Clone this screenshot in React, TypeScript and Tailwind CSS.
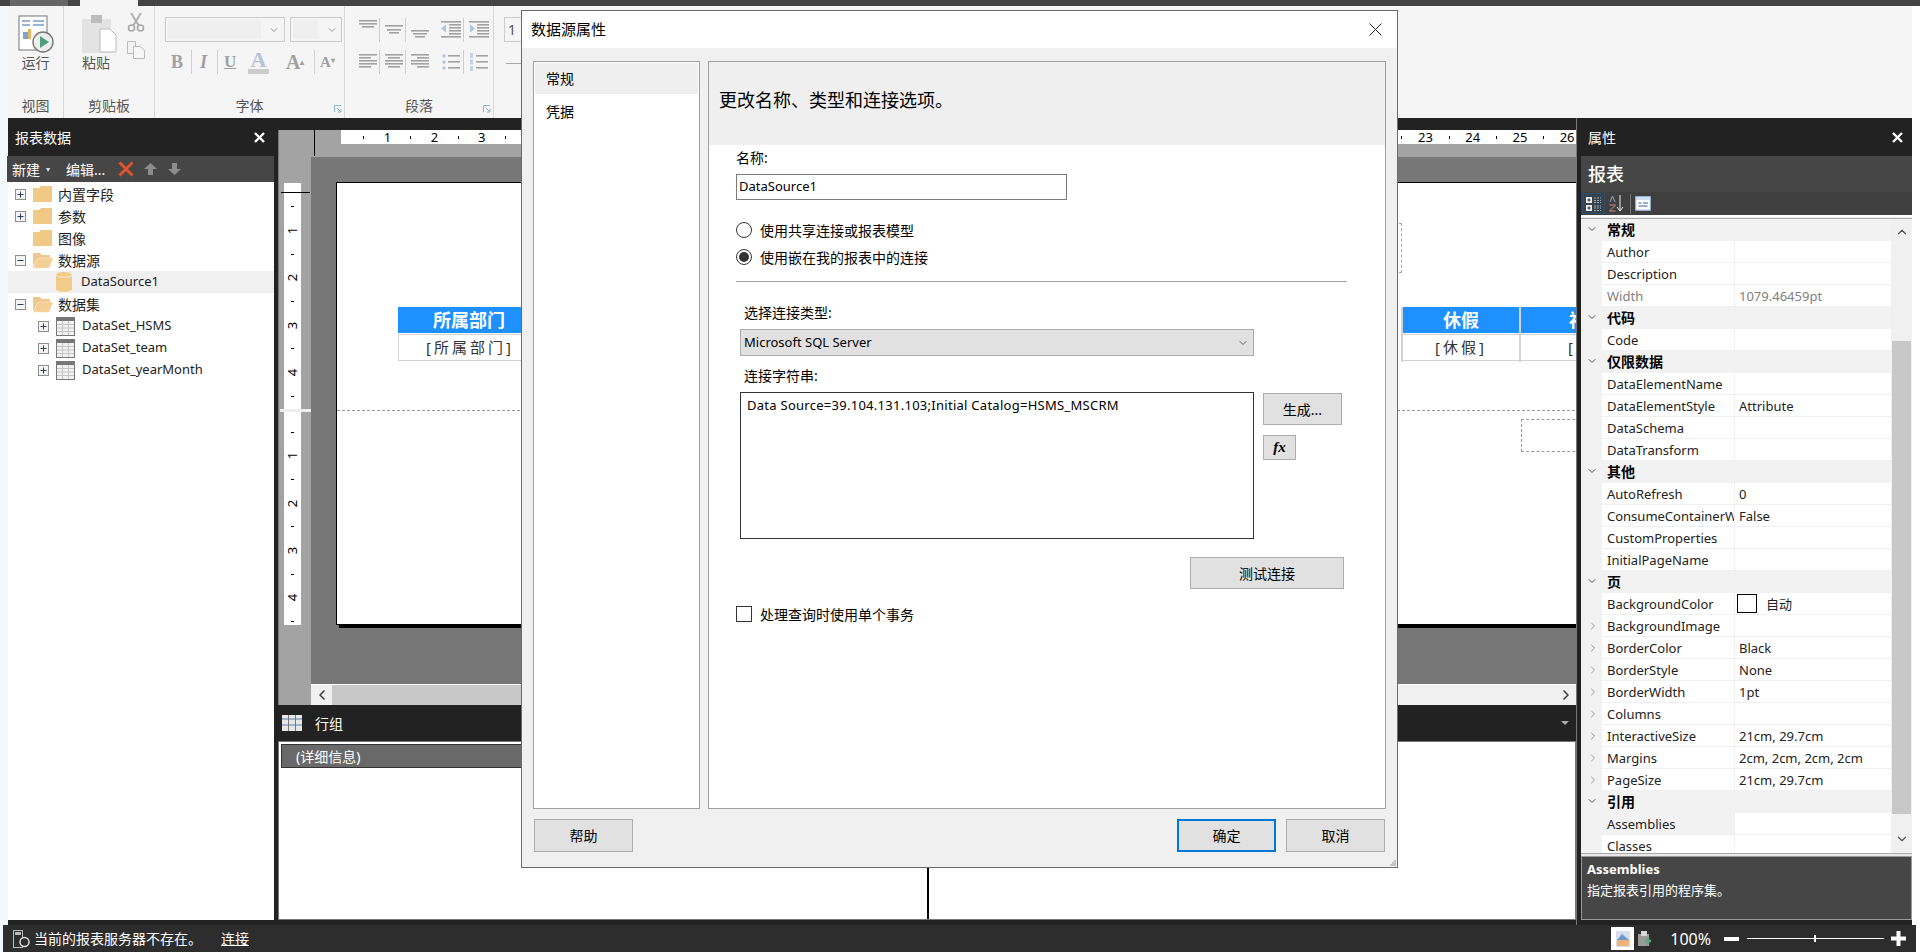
import type { ReactNode } from 'react'
import { ChevronDown, ChevronLeft, ChevronRight, ChevronUp } from 'lucide-react'

const CJK_UI = "[font-family:'Noto_Sans','Noto_Sans_CJK_SC',sans-serif]"

function Plus({ open }: { open?: boolean }) {
  return (
    <svg width="11" height="11" viewBox="0 0 11 11" className="shrink-0">
      <rect x="0.5" y="0.5" width="10" height="10" fill="#f4f4f4" stroke="#8e8e8e" />
      <path d="M2.5 5.5h6" stroke="#2b3f6b" />
      {!open && <path d="M5.5 2.5v6" stroke="#2b3f6b" />}
    </svg>
  )
}

function Folder({ open }: { open?: boolean }) {
  if (open) {
    return (
      <svg width="20" height="18" viewBox="0 0 20 18" className="shrink-0">
        <path d="M0 2h7l2 2h8v3H5L0 16z" fill="#edc98f" />
        <path d="M5 7h15l-4 10H0z" fill="#f3cf94" stroke="#f8e6c6" strokeWidth="0.6" />
      </svg>
    )
  }
  return (
    <svg width="19" height="16" viewBox="0 0 19 16" className="shrink-0">
      <path d="M0 2h6l2-2h11v16H0z" fill="#f0c987" />
    </svg>
  )
}

function TableIcon() {
  return (
    <svg width="19" height="19" viewBox="0 0 19 19" className="shrink-0">
      <rect width="19" height="19" fill="#777" />
      <rect x="1" y="4" width="17" height="14" fill="#f1f1f1" />
      <path d="M1 7.5h17M1 11h17M1 14.5h17M6.5 4v14M12.5 4v14" stroke="#c4c4c4" />
    </svg>
  )
}

function TreeRow({ label, indent, exp, icon, selected }: { label: string; indent: 0 | 1; exp?: 'plus' | 'minus'; icon: 'closed' | 'open' | 'db' | 'table'; selected?: boolean }) {
  return (
    <div className={`flex h-[22px] items-center text-[13px] text-[#222] ${selected ? 'bg-[#f0f0f0]' : ''} ${indent ? 'pl-[30px]' : 'pl-[7px]'}`}>
      <div className="w-[11px] shrink-0">{exp && <Plus open={exp === 'minus'} />}</div>
      <div className={`ml-[7px] flex shrink-0 items-center ${icon === 'table' ? 'w-[26px]' : 'w-[25px]'}`}>
        {icon === 'closed' && <Folder />}
        {icon === 'open' && <Folder open />}
        {icon === 'table' && <TableIcon />}
        {icon === 'db' && (
          <svg width="16" height="20" viewBox="0 0 16 20">
            <path d="M0 3c0-4 16-4 16 0v14c0 4-16 4-16 0z" fill="#f2ca8a" />
            <path d="M0 3c0 3 16 3 16 0" fill="none" stroke="#fbeacd" />
          </svg>
        )}
      </div>
      <span className={label.startsWith('Data') ? '' : 'text-[14px]'}>{label}</span>
    </div>
  )
}

function RibbonLines({ rows, w = 18, children }: { rows: [number, number, number][]; w?: number; children?: ReactNode }) {
  return (
    <svg width={w} height="20" viewBox={`0 0 ${w} 20`} className="shrink-0">
      {rows.map(([x, y, l], i) => (
        <rect key={i} x={x} y={y} width={l} height="1.6" fill="#a2a2a2" />
      ))}
      {children}
    </svg>
  )
}

function Sep() {
  return <div className="mx-[2px] h-[24px] w-px shrink-0 bg-[#cfcfcf]" />
}

function Launcher() {
  return (
    <svg width="8" height="8" viewBox="0 0 8 8" className="absolute bottom-[5px] right-[2px]">
      <path d="M0.5 7V0.5H7M3 3l4 4M7 4v3H4" fill="none" stroke="#8fb6d8" />
    </svg>
  )
}

const indentRows: [number, number, number][] = [[0, 1, 20], [8, 4, 12], [8, 7, 12], [8, 10, 12], [8, 13, 12], [0, 16, 20]]

function Ribbon() {
  return (
    <div className="mx-[8px] flex h-[112px] bg-[#f5f5f5] text-[#555]">
      <div className="w-[56px] border-r border-[#d6d6d6]">
        <div className="flex h-[90px] flex-col items-center pt-[9px]">
          <svg width="36" height="38" viewBox="0 0 36 38">
            <rect x="1" y="1" width="28" height="34" fill="#fff" stroke="#777" />
            <path d="M4 6h8M15 6h11M4 10h8M15 10h11" stroke="#7a9cc8" strokeWidth="1.5" />
            <rect x="5" y="17" width="7" height="7" fill="#7fa3cf" />
            <rect x="10" y="14" width="3" height="10" fill="#e9b35f" />
            <circle cx="25" cy="27" r="10" fill="#eee" stroke="#777" strokeWidth="1.4" />
            <path d="M22 21l9 6-9 6z" fill="#4aa37c" />
          </svg>
          <span className="text-[14px] leading-[20px]">运行</span>
        </div>
        <div className="text-center text-[14px] leading-[20px]">视图</div>
      </div>
      <div className="w-[91px] border-r border-[#d6d6d6]">
        <div className="flex h-[90px] pt-[7px]">
          <div className="ml-[18px] flex w-[45px] flex-col items-start pt-[2px]">
            <svg width="36" height="38" viewBox="0 0 36 38">
              <rect x="0" y="4" width="29" height="34" rx="1" fill="#e3e3e3" />
              <rect x="9" y="0" width="11" height="8" fill="#bdbdbd" />
              <path d="M18 14h10l6 6v17H18z" fill="#fff" stroke="#bbb" />
            </svg>
            <span className="text-[14px] leading-[20px]">粘贴</span>
          </div>
          <div className="flex flex-col items-start gap-[9px]">
            <svg width="18" height="19" viewBox="0 0 18 19">
              <path d="M4 0l8 13M14 0L6 13" stroke="#b2b2b2" strokeWidth="2" />
              <circle cx="4.5" cy="15" r="3" fill="none" stroke="#a8a8a8" strokeWidth="1.6" />
              <circle cx="13.5" cy="15" r="3" fill="none" stroke="#a8a8a8" strokeWidth="1.6" />
            </svg>
            <svg width="19" height="18" viewBox="0 0 19 18">
              <path d="M0.5 0.5h8v12h-8z" fill="#f3f3f3" stroke="#bbb" />
              <path d="M6.5 5.5h7l4 4v8h-11z" fill="#f8f8f8" stroke="#bbb" />
            </svg>
          </div>
        </div>
        <div className="text-center text-[14px] leading-[20px]">剪贴板</div>
      </div>
      <div className="relative w-[190px] border-r border-[#d6d6d6]">
        <div className="h-[90px] pt-[11px]">
          <div className="ml-[10px] flex gap-[5px]">
            <div className="flex h-[25px] w-[120px] items-center border border-[#ccc] p-[2px]">
              <div className="h-full w-[93px] bg-[#efefef]" />
              <ChevronDown size={12} className="ml-[7px] text-[#999]" />
            </div>
            <div className="flex h-[25px] w-[52px] items-center border border-[#ccc] p-[2px]">
              <div className="h-full w-[25px] bg-[#efefef]" />
              <ChevronDown size={12} className="ml-[8px] text-[#999]" />
            </div>
          </div>
          <div className="ml-[16px] mt-[8px] flex h-[24px] items-center font-['Liberation_Serif',serif] text-[#a0a0a0]">
            <span className="w-[18px] text-[18px] font-bold">B</span>
            <Sep />
            <span className="w-[21px] pl-[6px] text-[18px] font-bold italic">I</span>
            <Sep />
            <span className="w-[18px] pl-[4px] text-[17px] font-bold leading-[18px] underline">U</span>
            <div className="ml-[10px] flex w-[36px] flex-col items-start">
              <span className="w-[21px] text-center text-[22px] font-bold leading-[18px] text-[#b3c2d6]">A</span>
              <span className="h-[5px] w-[21px] bg-[#ccc]" />
            </div>
            <span className="ml-[2px] w-[26px] text-[20px] font-bold">A<sup className="text-[8px]">▴</sup></span>
            <Sep />
            <span className="ml-[3px] text-[15px] font-bold">A<sup className="text-[8px]">▾</sup></span>
          </div>
        </div>
        <div className="text-center text-[14px] leading-[20px]">字体</div>
        <Launcher />
      </div>
      <div className="relative w-[149px] border-r border-[#d6d6d6]">
        <div className="h-[90px] pt-[12px]">
          <div className="ml-[14px] flex h-[24px] items-center">
            <RibbonLines rows={[[0, 0, 18], [0, 3, 18], [3, 6, 12]]} />
            <Sep />
            <div className="ml-[3px]"><RibbonLines rows={[[0, 5, 18], [2, 9, 14], [4, 12, 10]]} /></div>
            <Sep />
            <div className="ml-[3px]"><RibbonLines rows={[[0, 10, 18], [2, 13, 14], [4, 16, 10]]} /></div>
            <div className="ml-[12px]">
              <RibbonLines w={20} rows={indentRows}><path d="M0 8.500l5-4v8z" fill="#a9c3e6" /></RibbonLines>
            </div>
            <Sep />
            <div className="ml-[3px]">
              <RibbonLines w={20} rows={indentRows}><path d="M6 8.500l-5-4v8z" fill="#a9c3e6" /></RibbonLines>
            </div>
          </div>
          <div className="ml-[14px] mt-[8px] flex h-[24px] items-center">
            <RibbonLines rows={[[0, 2, 18], [0, 5, 12], [0, 8, 18], [0, 11, 18], [0, 14, 12]]} />
            <Sep />
            <div className="ml-[3px]"><RibbonLines rows={[[0, 2, 18], [3, 5, 12], [0, 8, 18], [0, 11, 18], [3, 14, 12]]} /></div>
            <Sep />
            <div className="ml-[3px]"><RibbonLines rows={[[0, 2, 18], [6, 5, 12], [0, 8, 18], [0, 11, 18], [6, 14, 12]]} /></div>
            <div className="ml-[12px]">
              <RibbonLines w={20} rows={[[7, 3, 12], [7, 9, 12], [7, 15, 12]]}>
                <circle cx="3" cy="4" r="1.800" fill="#b5c7e2" />
                <circle cx="3" cy="10" r="1.800" fill="#b5c7e2" />
                <circle cx="3" cy="16" r="1.800" fill="#b5c7e2" />
              </RibbonLines>
            </div>
            <Sep />
            <div className="ml-[3px]">
              <RibbonLines w={20} rows={[[7, 3, 12], [7, 9, 12], [7, 15, 12]]}>
                <rect x="1" y="1" width="3" height="5" fill="#c3d2e8" />
                <rect x="1" y="7.500" width="3" height="5" fill="#c3d2e8" />
                <rect x="1" y="14" width="3" height="5" fill="#c3d2e8" />
              </RibbonLines>
            </div>
          </div>
        </div>
        <div className="text-center text-[14px] leading-[20px]">段落</div>
        <Launcher />
      </div>
      <div className="flex-1">
        <div className="ml-[10px] mt-[11px] flex h-[25px] w-[40px] items-center border border-[#ccc] pl-[3px] text-[14px]">1</div>
        <div className="ml-[12px] mt-[21px] h-px w-[30px] bg-[#aaa]" />
      </div>
    </div>
  )
}

function Close() {
  return (
    <svg width="11" height="11" viewBox="0 0 11 11">
      <path d="M1 1l9 9M10 1l-9 9" stroke="#fff" strokeWidth="2.4" />
    </svg>
  )
}

function LeftPanel() {
  return (
    <div className="flex w-[266px] flex-col">
      <div className="flex h-[38px] items-center justify-between pl-[7px] pr-[9px] text-[14px] text-white">
        <span>报表数据</span>
        <Close />
      </div>
      <div className="-ml-px flex h-[26px] items-center bg-[#464646] pl-[5px] text-[14px] text-white">
        <span>新建</span>
        <span className="ml-[6px] text-[8px] text-[#ddd]">▾</span>
        <span className="ml-[16px]">编辑...</span>
        <svg width="16" height="16" viewBox="0 0 16 16" className="ml-[13px]">
          <path d="M1.5 1.5l13 13M14.5 1.5l-13 13" stroke="#e0532a" strokeWidth="3" />
        </svg>
        <svg width="13" height="12" viewBox="0 0 13 12" className="ml-[10px]"><path d="M6.5 0L13 6H9v6H4V6H0z" fill="#8c8c8c" /></svg>
        <svg width="13" height="12" viewBox="0 0 13 12" className="ml-[11px]"><path d="M6.5 12L13 6H9V0H4v6H0z" fill="#8c8c8c" /></svg>
      </div>
      <div className="mb-[5px] flex-1 bg-white pt-[1px]">
        <TreeRow label="内置字段" indent={0} exp="plus" icon="closed" />
        <TreeRow label="参数" indent={0} exp="plus" icon="closed" />
        <TreeRow label="图像" indent={0} icon="closed" />
        <TreeRow label="数据源" indent={0} exp="minus" icon="open" />
        <TreeRow label="DataSource1" indent={1} icon="db" selected />
        <TreeRow label="数据集" indent={0} exp="minus" icon="open" />
        <TreeRow label="DataSet_HSMS" indent={1} exp="plus" icon="table" />
        <TreeRow label="DataSet_team" indent={1} exp="plus" icon="table" />
        <TreeRow label="DataSet_yearMonth" indent={1} exp="plus" icon="table" />
      </div>
    </div>
  )
}

function VRuler({ items }: { items: string[] }) {
  return (
    <>
      {items.map((n, i) => (
        <div key={i} className="flex h-[23.7px] items-center justify-center text-[13px] leading-none text-black">
          {n === '-' ? <span className="h-px w-[3px] bg-black" /> : <span className="-rotate-90">{n}</span>}
        </div>
      ))}
    </>
  )
}

function HRuler() {
  const cells: string[] = []
  for (let n = 1; n <= 26; n++) cells.push('-', String(n))
  return (
    <div className="ml-[62px] flex h-[14px] items-center bg-white pl-[11px] text-[13px] leading-[14px] text-black">
      {cells.map((c, i) => (
        <div key={i} className="flex w-[23.6px] shrink-0 justify-center">
          {c === '-' ? <span className="h-[3px] w-px bg-black" /> : <span>{c}</span>}
        </div>
      ))}
    </div>
  )
}

function DesignSurface() {
  const ruler = ['-', '1', '-', '2', '-', '3', '-', '4', '-']
  return (
    <div className="relative h-[575px] border-l border-[#777] bg-[#a3a3a3]">
      <HRuler />
      <div className="absolute left-[35px] top-0 h-[26px] w-px bg-black" />
      <div className="mt-[13px] flex h-[548px]">
        <div className="relative w-[32px] shrink-0 pt-[26px]">
          <div className="ml-[5px] h-[442px] w-[17px] overflow-hidden bg-white">
            <div className="h-[12px]" />
            <VRuler items={ruler} />
            <div className="h-[12px]" />
            <VRuler items={ruler} />
          </div>
          <div className="absolute left-[2px] top-[35px] h-px w-[29px] bg-black" />
          <div className="absolute left-[1px] top-[252px] h-[3px] w-[31px] bg-[#eee]" />
        </div>
        <div className="flex min-w-0 flex-1 flex-col">
          <div className="min-h-0 flex-1 overflow-hidden bg-[#777] pl-[25px] pt-[25px]">
            <div className="relative h-[443px] w-[1320px] border border-black bg-white shadow-[3px_3px_0_#000]">
              <div className="h-[228px] border-b border-dashed border-[#999] pt-[124px]">
                <div className="ml-[61px] flex">
                  <div className="w-[144px] border-b border-white">
                    <div className="flex h-[26px] items-center justify-center bg-[#1e90ff] pr-[2px] text-[18px] font-bold text-white">所属部门</div>
                    <div className="mt-px flex h-[27px] items-center justify-center border border-[#d3d3d3] text-[15px] tracking-[3px] text-[#333]">[所属部门]</div>
                  </div>
                  <div className="w-[859px]" />
                  <div className="w-[118px] border-l-2 border-[#d3d3d3]">
                    <div className="flex h-[26px] items-center justify-center bg-[#1e90ff] text-[18px] font-bold text-white">休假</div>
                    <div className="mt-px flex h-[27px] items-center justify-center border-y border-[#d3d3d3] text-[15px] tracking-[3px] text-[#333]">[休假]</div>
                  </div>
                  <div className="w-[134px] border-l-2 border-[#d3d3d3]">
                    <div className="flex h-[26px] items-center justify-center bg-[#1e90ff] text-[18px] font-bold text-white">福利</div>
                    <div className="mt-px flex h-[27px] items-center justify-center border-y border-[#d3d3d3] pl-[14px] text-[15px] tracking-[3px] text-[#333]">[福利]</div>
                  </div>
                </div>
              </div>
              <div className="absolute left-[960px] top-[40px] h-[50px] w-[105px] border border-dashed border-[#aaa]" />
              <div className="absolute left-[1184px] top-[236px] h-[33px] w-[80px] border border-dashed border-[#999]" />
            </div>
          </div>
          <div className="flex h-[21px] items-center border-t border-white bg-[#f0f0f0] text-[#444]">
            <div className="flex w-[21px] justify-center"><ChevronLeft size={16} strokeWidth={2.5} /></div>
            <div className="h-full w-[700px] bg-[#c8c8c8]" />
            <div className="flex-1" />
            <div className="flex w-[21px] justify-center"><ChevronRight size={16} strokeWidth={2.5} /></div>
          </div>
        </div>
      </div>
    </div>
  )
}

function Center() {
  return (
    <div className="ml-[4px] flex w-[1298px] flex-col pt-[12px]">
      <DesignSurface />
      <div className="flex h-[36px] items-center text-[14px] text-white">
        <svg width="20" height="16" viewBox="0 0 20 16" className="ml-[4px]">
          <rect width="20" height="16" fill="#e6e6e6" />
          <path d="M0 3h20v2H0zM0 9h20v2H0z" fill="#9fb3cc" />
          <path d="M6.5 0v16M13.5 0v16" stroke="#777" />
        </svg>
        <span className="ml-[13px]">行组</span>
        <span className="ml-auto mr-[7px] h-0 w-0 border-x-[4px] border-t-[4px] border-x-transparent border-t-[#aaa]" />
      </div>
      <div className="mb-[5px] flex flex-1 border border-[#777] bg-white p-[2px]">
        <div className="w-[646px]">
          <div className="flex h-[24px] items-center border border-[#333] bg-[#696969] pl-[14px] text-[14px] text-white">(详细信息)</div>
        </div>
        <div className="-my-[2px] w-[2px] bg-black" />
      </div>
    </div>
  )
}

type Prop = { name?: string; value?: string; cat?: string; arrow?: boolean; muted?: boolean; swatch?: boolean; active?: boolean }

const props: Prop[] = [
  { cat: '常规' },
  { name: 'Author' },
  { name: 'Description' },
  { name: 'Width', value: '1079.46459pt', muted: true },
  { cat: '代码' },
  { name: 'Code' },
  { cat: '仅限数据' },
  { name: 'DataElementName' },
  { name: 'DataElementStyle', value: 'Attribute' },
  { name: 'DataSchema' },
  { name: 'DataTransform' },
  { cat: '其他' },
  { name: 'AutoRefresh', value: '0' },
  { name: 'ConsumeContainerWhitespace', value: 'False' },
  { name: 'CustomProperties' },
  { name: 'InitialPageName' },
  { cat: '页' },
  { name: 'BackgroundColor', value: '自动', swatch: true },
  { name: 'BackgroundImage', arrow: true },
  { name: 'BorderColor', value: 'Black', arrow: true },
  { name: 'BorderStyle', value: 'None', arrow: true },
  { name: 'BorderWidth', value: '1pt', arrow: true },
  { name: 'Columns', arrow: true },
  { name: 'InteractiveSize', value: '21cm, 29.7cm', arrow: true },
  { name: 'Margins', value: '2cm, 2cm, 2cm, 2cm', arrow: true },
  { name: 'PageSize', value: '21cm, 29.7cm', arrow: true },
  { cat: '引用' },
  { name: 'Assemblies', active: true },
  { name: 'Classes' },
]

function PropRow({ p }: { p: Prop }) {
  if (p.cat) {
    return (
      <div className="flex h-[22px] items-center bg-[#f2f2f2] pb-[2px] text-[14px] font-bold text-black">
        <div className="flex w-[21px] justify-center pl-px"><ChevronDown size={12} strokeWidth={2} className="text-[#555]" /></div>
        <span className="pl-[5px]">{p.cat}</span>
      </div>
    )
  }
  return (
    <div className={`flex h-[22px] text-[13px] leading-[22px] ${p.muted ? 'text-[#808080]' : 'text-[#222]'}`}>
      <div className="flex w-[21px] shrink-0 items-center justify-center bg-[#f2f2f2] pl-[2px]">
        {p.arrow && <ChevronRight size={12} className="text-[#999]" />}
      </div>
      <div className={`w-[133px] shrink-0 overflow-hidden whitespace-nowrap border-b border-r border-[#f0f0f0] pl-[5px] ${p.active ? 'bg-[#f2f2f2]' : 'bg-white'}`}>{p.name}</div>
      <div className="flex min-w-0 flex-1 items-center border-b border-[#f0f0f0] bg-white pl-[4px]">
        {p.swatch && <span className="-ml-[2px] mr-[9px] h-[19px] w-[20px] shrink-0 border border-black bg-white" />}
        {p.value}
      </div>
    </div>
  )
}

function RightPanel() {
  return (
    <div className="relative flex w-[336px] flex-col border-l border-[#777] bg-[#222] pl-[4px]">
      <div className="flex h-[38px] items-center justify-between pl-[7px] pr-[9px] text-[14px] text-white">
        <span>属性</span>
        <Close />
      </div>
      <div className="flex h-[36px] items-center bg-[#464646] pl-[7px] text-[18px] font-medium text-white">报表</div>
      <div className="flex h-[23px] items-center bg-[#3f3f3f] pl-[1px]">
        <div className="flex h-[21px] w-[23px] items-center justify-center border border-[#2d4f6e] bg-[#36424c]">
          <svg width="16" height="16" viewBox="0 0 16 16">
            <rect x="0" y="1" width="6" height="6" fill="#eee" />
            <rect x="0" y="9" width="6" height="6" fill="#eee" />
            <path d="M1.500 4h3M3 2.500v3M1.500 12h3M3 10.500v3" stroke="#222" />
            <path d="M8 2h7M8 4.500h7M8 6.500h7M8 10h7M8 12h7M8 14.500h7" stroke="#9ab" strokeDasharray="2 1" />
          </svg>
        </div>
        <svg width="17" height="17" viewBox="0 0 17 17" className="ml-[3px]">
          <path d="M2 7l2.500-6L7 7" fill="none" stroke="#8da8d8" />
          <path d="M1.500 10h6l-6 6h6" fill="none" stroke="#d08a8a" />
          <path d="M12 0v15M9 12l3 4 3-4" fill="none" stroke="#eee" />
        </svg>
        <div className="ml-[5px] h-[20px] w-px bg-[#777]" />
        <svg width="16" height="15" viewBox="0 0 16 15" className="ml-[4px]">
          <rect width="16" height="15" fill="#cfe0f3" stroke="#5a7fa8" />
          <rect x="1.500" y="4" width="13" height="9" fill="#fff" />
          <path d="M3.500 7h3M8 7h5M3.500 10h9" stroke="#3a5f9a" />
        </svg>
      </div>
      <div className="h-[2px] bg-white" />
      <div className="h-[2px] border-b border-[#aaa] bg-[#eee]" />
      <div className="flex h-[634px] overflow-hidden">
        <div className="w-[310px] shrink-0">
          {props.map((p, i) => <PropRow key={i} p={p} />)}
        </div>
        <div className="flex w-[21px] flex-col items-center bg-[#f0f0f0] text-[#555]">
          <div className="flex h-[20px] items-end"><ChevronUp size={14} strokeWidth={2} /></div>
          <div className="mt-[102px] h-[473px] w-[19px] bg-[#c8c8c8]" />
          <div className="mt-[18px]"><ChevronDown size={14} strokeWidth={2} /></div>
        </div>
      </div>
      <div className="h-[3px] border-t border-[#aaa] bg-[#e8e8e8]" />
      <div className="mb-[5px] flex-1 border border-[#999] bg-[#464646] pl-[5px] pt-[2px] text-white">
        <div className="text-[13px] font-bold leading-[20px]">Assemblies</div>
        <div className="mt-px text-[13px] leading-[20px]">指定报表引用的程序集。</div>
      </div>
    </div>
  )
}

function Status() {
  return (
    <div className="ml-[3px] mr-[4px] flex h-[27px] items-center bg-[#2d2d2d] pl-[10px] text-[14px] text-white">
      <svg width="17" height="18" viewBox="0 0 17 18">
        <rect x="0.5" y="0.5" width="9" height="17" fill="none" stroke="#bbb" />
        <rect x="2" y="2" width="6" height="3" fill="#bbb" />
        <circle cx="11.500" cy="12" r="4.500" fill="#2d2d2d" stroke="#ddd" strokeWidth="1.5" />
      </svg>
      <span className="ml-[4px]">当前的报表服务器不存在。</span>
      <span className="ml-[19px] underline">连接</span>
      <div className="ml-auto flex h-[23px] w-[23px] items-center justify-center bg-white">
        <svg width="14" height="16" viewBox="0 0 14 16">
          <rect width="14" height="16" fill="#d7dfe8" />
          <path d="M1 9l5-6 7 6z" fill="#6d9ad0" />
          <rect x="1" y="9" width="12" height="6" fill="#efb27a" />
        </svg>
      </div>
      <svg width="14" height="15" viewBox="0 0 14 15" className="ml-[4px]">
        <rect x="0" y="3" width="11" height="12" fill="#9a9a9a" />
        <rect x="3" y="0" width="6" height="5" fill="#d8d8d8" />
        <path d="M10 6v8M7 10h6" stroke="#5fa880" strokeWidth="2.500" />
      </svg>
      <span className="ml-[18px] text-[16px]">100%</span>
      <div className="ml-[13px] h-[4px] w-[15px] bg-white" />
      <div className="relative ml-[8px] h-px w-[137px] bg-white">
        <div className="absolute left-[67px] top-[-3px] h-[7px] w-[2px] bg-white" />
      </div>
      <svg width="15" height="15" viewBox="0 0 15 15" className="ml-[7px] mr-[10px]">
        <path d="M7.500 0v15M0 7.500h15" stroke="#fff" strokeWidth="4" />
      </svg>
    </div>
  )
}

function DlgButton({ label, className }: { label: string; className: string }) {
  return (
    <button className={`flex items-center justify-center border border-[#adadad] bg-[#e1e1e1] text-[14px] text-black ${className}`}>{label}</button>
  )
}

function Dialog() {
  return (
    <div className="absolute left-[521px] top-[10px] flex h-[858px] w-[877px] flex-col border border-[#6b6b6b] bg-[#f0f0f0] text-black">
      <div className="flex h-[37px] shrink-0 items-center justify-between bg-white pl-[9px] pr-[15px] text-[15px]">
        <span>数据源属性</span>
        <svg width="13" height="13" viewBox="0 0 13 13"><path d="M0.500 0.500l12 12M12.500 0.500l-12 12" stroke="#222" /></svg>
      </div>
      <div className="mx-[11px] mt-[13px] flex h-[748px] shrink-0 gap-[8px]">
        <div className="w-[167px] border border-[#a0a0a0] bg-white p-px text-[14px]">
          <div className="flex h-[31px] items-center bg-[#efefef] pl-[11px]">常规</div>
          <div className="flex h-[34px] items-center pl-[11px]">凭据</div>
        </div>
        <div className="flex-1 border border-[#a0a0a0] bg-white text-[14px]">
          <div className="flex h-[83px] items-center bg-[#efefef] pb-[6px] pl-[10px] text-[18px]">更改名称、类型和连接选项。</div>
          <div className="pl-[27px]">
            <div className="flex h-[24px] items-center">名称:</div>
            <div className="mt-[5px] flex h-[26px] w-[331px] items-center border border-[#7a7a7a] pl-[2px] text-[13px]">DataSource1</div>
            <div className="mt-[20px] flex h-[20px] items-center gap-[8px]">
              <span className="h-[16px] w-[16px] rounded-full border border-[#333] bg-white" />
              <span>使用共享连接或报表模型</span>
            </div>
            <div className="mt-[7px] flex h-[20px] items-center gap-[8px]">
              <span className="flex h-[16px] w-[16px] items-center justify-center rounded-full border border-[#333] bg-white">
                <span className="h-[10px] w-[10px] rounded-full bg-[#333]" />
              </span>
              <span>使用嵌在我的报表中的连接</span>
            </div>
            <div className="mt-[14px] h-px w-[611px] bg-[#a0a0a0]" />
            <div className="ml-[4px]">
              <div className="ml-[4px] mt-[20px] flex h-[20px] items-center">选择连接类型:</div>
              <div className="mt-[7px] flex h-[27px] w-[514px] items-center justify-between border border-[#adadad] bg-[#e1e1e1] pl-[3px] pr-[4px] text-[13px]">
                <span>Microsoft SQL Server</span>
                <ChevronDown size={12} strokeWidth={1.5} className="text-[#333]" />
              </div>
              <div className="ml-[4px] mt-[9px] flex h-[20px] items-center">连接字符串:</div>
              <div className="mt-[7px] flex">
                <div className="h-[147px] w-[514px] border border-[#333] pl-[6px] pt-[3px] text-[13px] tracking-[0.27px]">Data Source=39.104.131.103;Initial Catalog=HSMS_MSCRM</div>
                <div className="ml-[9px]">
                  <DlgButton label="生成..." className="mt-px h-[32px] w-[79px]" />
                  <button className="mt-[10px] flex h-[25px] w-[33px] items-center justify-center border border-[#adadad] bg-[#e1e1e1] font-['Liberation_Serif',serif] text-[15px] font-bold italic">fx</button>
                </div>
              </div>
              <div className="ml-[450px] mt-[18px]">
                <DlgButton label="测试连接" className="h-[32px] w-[154px]" />
              </div>
            </div>
            <div className="mt-[17px] flex h-[16px] items-center gap-[8px]">
              <span className="h-[16px] w-[16px] border border-[#333] bg-white" />
              <span>处理查询时使用单个事务</span>
            </div>
          </div>
        </div>
      </div>
      <div className="mx-[12px] mt-[10px] flex">
        <DlgButton label="帮助" className="h-[33px] w-[99px]" />
        <div className="flex-1" />
        <button className="flex h-[33px] w-[99px] items-center justify-center border-2 border-[#0078d7] bg-[#e1e1e1] text-[14px]">确定</button>
        <DlgButton label="取消" className="ml-[10px] h-[33px] w-[99px]" />
      </div>
      <svg width="6" height="6" viewBox="0 0 6 6" className="absolute bottom-[1px] right-[1px]">
        <path d="M4 0h2v2H4zM2 2h2v2H2zM4 2h2v2H4zM0 4h2v2H0zM2 4h2v2H2zM4 4h2v2H4z" fill="#c4c4c4" />
      </svg>
    </div>
  )
}

export default function App() {
  return (
    <div className={`relative flex h-[952px] w-[1920px] flex-col overflow-hidden bg-white ${CJK_UI}`}>
      <div className="absolute inset-y-0 left-0 w-[8px] bg-[#f3f8ff]" />
      <div className="relative flex h-[6px] bg-[#444] pl-[3px]">
        <div className="ml-[7px] w-[58px] bg-[#666]" />
        <div className="ml-[12px] w-[58px] bg-[#f5f5f5]" />
      </div>
      <div className="relative">
        <Ribbon />
      </div>
      <div className="relative ml-[8px] mr-[8px] flex h-[807px] bg-[#222]">
        <LeftPanel />
        <Center />
        <RightPanel />
      </div>
      <div className="relative">
        <Status />
      </div>
      <Dialog />
    </div>
  )
}
